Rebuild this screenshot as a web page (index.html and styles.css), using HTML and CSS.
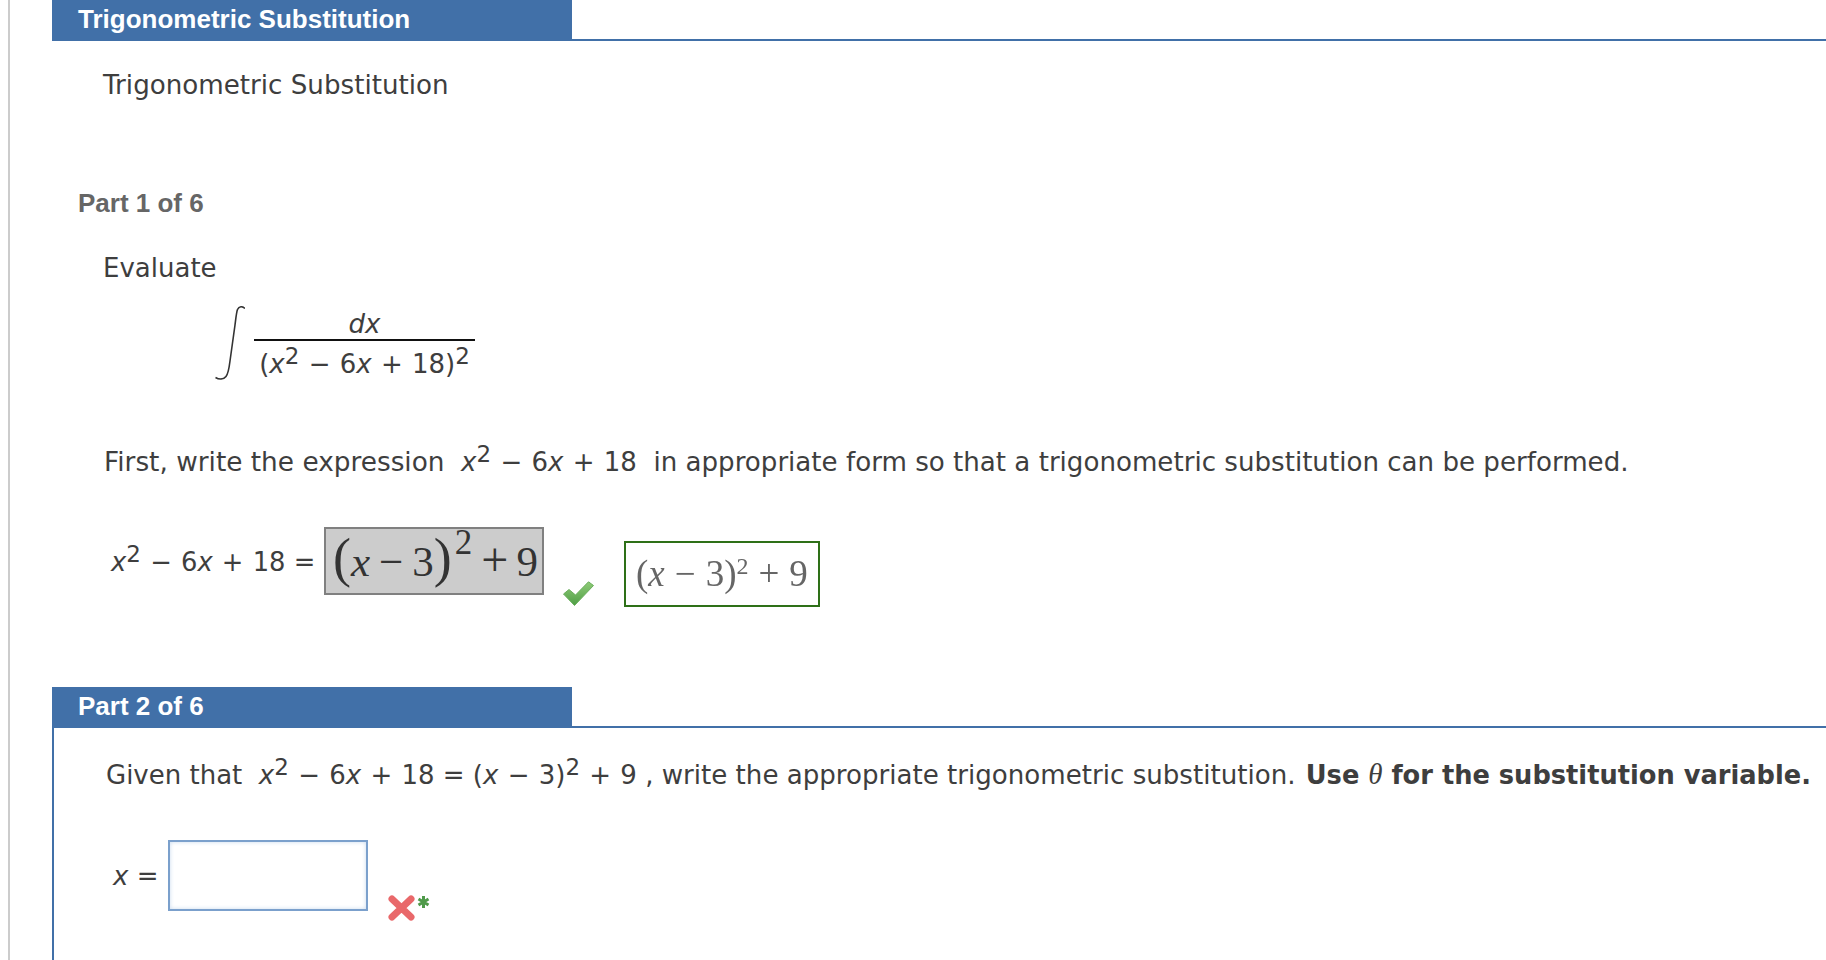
FILE: index.html
```html
<!DOCTYPE html>
<html lang="en">
<head>
<meta charset="utf-8">
<title>Trigonometric Substitution</title>
<link rel="stylesheet" href="styles.css">
</head>
<body>
<main class="page">
  <section class="intro">
    <header class="head"><h2 class="tab">Trigonometric Substitution</h2></header>
    <p class="line subtitle">Trigonometric Substitution</p>
    <h3 class="part-title">Part 1 of 6</h3>
    <p class="line evaluate">Evaluate</p>
    <div class="integral">
      <svg class="int-sign" viewBox="0 0 30 75" aria-hidden="true"><path d="M30 3.500C27.500 1 24 1 22.500 4.500C21.500 7 21 12 20 20L15 56C14 64 13 69 11 71.500C8.500 74.500 4 74.500 .5 72.500" fill="none" stroke="#333" stroke-width="1.600"/></svg>
      <div class="frac">
        <div class="num"><i>dx</i></div>
        <div class="den">(<i>x</i><sup>2</sup> <span class="op">−</span> 6<i>x</i> <span class="op">+</span> 18)<sup>2</sup></div>
      </div>
    </div>
    <p class="line first"><span class="lead">First, write the expression</span> &nbsp;<span class="mth"><i>x</i><sup>2</sup> <span class="op">−</span> 6<i>x</i> <span class="op">+</span> 18</span>&nbsp; in appropriate form so that a trigonometric substitution can be performed.</p>
    <div class="eq-row">
      <div class="line eq-label"><i>x</i><sup>2</sup> <span class="op">−</span> 6<i>x</i> <span class="op">+</span> 18 =</div>
      <div class="answer"><span class="par">(</span><i>x</i><span class="m-op">−</span>3<span class="par">)</span><sup>2</sup><span class="m-op plus">+</span>9</div>
      <svg class="check" viewBox="0 0 31 25" aria-hidden="true"><defs><linearGradient id="cg" x1="0" y1="0" x2="0" y2="1"><stop offset="0" stop-color="#8fcb78"/><stop offset="1" stop-color="#4f9e45"/></linearGradient></defs><path d="M.5 13L6 8.500L12.500 14L25.500 .8L30.500 4.500L11.500 24.500Z" fill="url(#cg)" stroke="#6aae5c" stroke-width="1" stroke-linejoin="round"/></svg>
      <div class="correct"><span class="correct-math">(<i>x</i><span class="m-op">−</span>3)<sup>2</sup><span class="m-op">+</span>9</span></div>
    </div>
  </section>
  <section class="part">
    <header class="head"><h2 class="tab">Part 2 of 6</h2></header>
    <p class="line given">Given that &nbsp;<i>x</i><sup>2</sup> <span class="op">−</span> 6<i>x</i> <span class="op">+</span> 18 = (<i>x</i> <span class="op">−</span> 3)<sup>2</sup> <span class="op">+</span> 9 , <span class="tail">write the appropriate trigonometric substitution.</span> <b>Use <i class="theta">θ</i> for the substitution variable.</b></p>
    <div class="input-row">
      <label class="line x-label" for="sub"><i>x</i> =</label>
      <input class="entry" id="sub" type="text">
      <svg class="cross" viewBox="0 0 27 26" aria-hidden="true"><path d="M4 4L23 22M23 4L4 22" fill="none" stroke="#e9686a" stroke-width="7" stroke-linecap="round"/></svg>
      <svg class="star" viewBox="0 0 13 14" aria-hidden="true"><path d="M6.500 1V13M1.500 4L11.500 10M11.500 4L1.500 10" fill="none" stroke="#4f9a4a" stroke-width="3"/></svg>
    </div>
  </section>
</main>
</body>
</html>
```

FILE: styles.css
```css
html, body { margin: 0; padding: 0; background: #fff; }
body { height: 960px; overflow: hidden; padding-left: 8px; box-sizing: border-box; }
.page {
  height: 960px;
  overflow: hidden;
  border-left: 2px solid #ccc;
  padding-left: 42px;
  color: #3e3e3e;
  font-family: "DejaVu Sans", sans-serif;
  font-size: 26px;
}
.line { margin: 0; line-height: 30px; white-space: nowrap; }
sup { font-size: 23px; line-height: 0; vertical-align: 9px; }
.op { padding: 0 1px; }
.head { display: flex; border-bottom: 2px solid #4170a8; height: 39px; }
.tab {
  margin: 0 0 -2px;
  width: 520px;
  height: 41px;
  box-sizing: border-box;
  padding-left: 26px;
  background: #4170a8;
  color: #fff;
  font: bold 26px/38px "Liberation Sans", Arial, sans-serif;
}
.subtitle { margin: 29px 0 0 51px; font-size: 26.15px; }
.part-title {
  margin: 88px 0 0 26px;
  color: #666;
  font: bold 26px/30px "Liberation Sans", Arial, sans-serif;
}
.evaluate { margin: 35px 0 0 51px; }
.integral { display: flex; align-items: flex-start; margin: 22px 0 0 163px; }
.int-sign { width: 30px; height: 75px; flex: none; }
.frac { margin: 4px 0 0 9px; width: 221px; text-align: center; line-height: 30px; }
.num { border-bottom: 2px solid #111; height: 30px; }
.den { padding-top: 8px; white-space: nowrap; }
.first { margin: 67px 0 0 52px; font-size: 26.12px; }
.lead { font-size: 26.35px; }
.mth { font-size: 26px; }
.eq-row { display: flex; align-items: flex-start; margin: 50px 0 0 59px; }
.eq-label { width: 213px; flex: none; margin-top: 20px; font-size: 25.8px; }
.answer {
  width: 220px;
  height: 68px;
  flex: none;
  box-sizing: border-box;
  border: 2px solid #808080;
  background: #ccc;
  padding-left: 7px;
  font: 43px/66px "Liberation Serif", serif;
  white-space: nowrap;
  color: #333;
}
.answer sup { font-size: 35px; vertical-align: 22px; margin-left: 3px; }
.par { font-size: 54px; line-height: 0; }
.m-op { padding: 0 9px; }
.plus { font-size: 48px; line-height: 0; padding: 0 8px 0 9px; }
.check { width: 31px; height: 25px; flex: none; margin: 54px 0 0 19px; }
.correct {
  width: 196px;
  height: 66px;
  flex: none;
  box-sizing: border-box;
  border: 2px solid #2e7018;
  margin: 14px 0 0 30px;
  padding-left: 10px;
  font: 37px/62px "Liberation Serif", serif;
  color: #666;
  white-space: nowrap;
}
.correct-math { display: inline-block; filter: blur(.4px); }
.correct sup { font-size: 24px; vertical-align: 12px; }
.correct .m-op { padding: 0 10px; }
.part { margin-top: 80px; border-left: 2px solid #4170a8; height: 273px; }
.part .head { margin-left: -2px; }
.given { margin: 31px 0 0 52px; }
.tail { font-size: 26.1px; margin-right: 2px; }
.given b { font-size: 25.7px; }
.input-row { display: flex; align-items: flex-start; margin: 50px 0 0 59px; }
.x-label { width: 55px; flex: none; margin-top: 21px; }
.entry {
  width: 200px;
  height: 71px;
  flex: none;
  box-sizing: border-box;
  margin: 0;
  border: 2px solid #7ba0cc;
  box-shadow: inset 0 0 4px #c9daee;
  background: #fff;
}
.cross { width: 27px; height: 26px; flex: none; margin: 55px 0 0 20px; }
.star { width: 13px; height: 14px; flex: none; margin: 55px 0 0 2px; }
.theta { font-family: "Liberation Serif", serif; font-weight: normal; font-size: 29px; }
```
